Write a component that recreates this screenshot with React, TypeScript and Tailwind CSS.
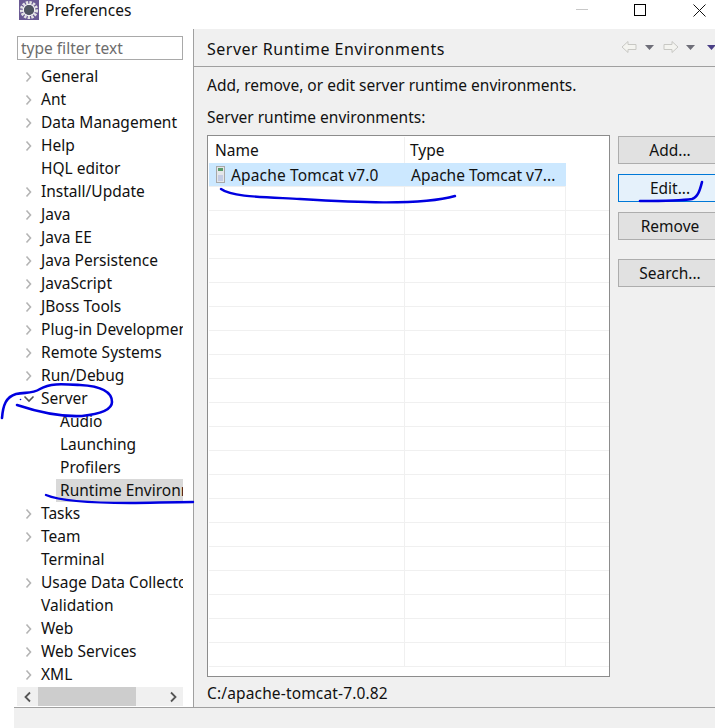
const treeItems = [
  { label: 'General', arrow: true },
  { label: 'Ant', arrow: true },
  { label: 'Data Management', arrow: true },
  { label: 'Help', arrow: true },
  { label: 'HQL editor' },
  { label: 'Install/Update', arrow: true },
  { label: 'Java', arrow: true },
  { label: 'Java EE', arrow: true },
  { label: 'Java Persistence', arrow: true },
  { label: 'JavaScript', arrow: true },
  { label: 'JBoss Tools', arrow: true },
  { label: 'Plug-in Development', arrow: true },
  { label: 'Remote Systems', arrow: true },
  { label: 'Run/Debug', arrow: true },
  { label: 'Server', open: true },
  { label: 'Audio', child: true },
  { label: 'Launching', child: true },
  { label: 'Profilers', child: true },
  { label: 'Runtime Environments', child: true, selected: true },
  { label: 'Tasks', arrow: true },
  { label: 'Team', arrow: true },
  { label: 'Terminal' },
  { label: 'Usage Data Collector', arrow: true },
  { label: 'Validation' },
  { label: 'Web', arrow: true },
  { label: 'Web Services', arrow: true },
  { label: 'XML', arrow: true },
]

function Chevron({ open }: { open?: boolean }) {
  if (open) {
    return (
      <svg width="12" height="12" viewBox="0 0 12 12" className="shrink-0">
        <path d="M1.5 3.5 L6 8 L10.5 3.5" fill="none" stroke="#555" strokeWidth="1.6" />
      </svg>
    )
  }
  return (
    <svg width="12" height="12" viewBox="0 0 12 12" className="shrink-0">
      <path d="M3.5 1.5 L7.5 6 L3.5 10.5" fill="none" stroke="#b4b4b4" strokeWidth="1.6" />
    </svg>
  )
}

function TreeRow({ item }: { item: (typeof treeItems)[number] & { arrow?: boolean; open?: boolean; child?: boolean; selected?: boolean } }) {
  return (
    <div className="flex h-[23px] items-center whitespace-nowrap">
      {item.child ? (
        <div
          className={
            item.selected
              ? 'ml-[39px] h-[23px] flex-1 overflow-hidden bg-[#d9d9d9] pl-1 leading-[23px]'
              : 'ml-[39px] h-[23px] pl-1 leading-[23px]'
          }
        >
          {item.label}
        </div>
      ) : (
        <>
          <div className="flex w-6 shrink-0 justify-start pl-[6px]">
            {(item.arrow || item.open) && <Chevron open={item.open} />}
          </div>
          <span>{item.label}</span>
        </>
      )}
    </div>
  )
}

function ActionButton({ label, focused }: { label: string; focused?: boolean }) {
  return (
    <button
      className={
        focused
          ? 'h-7 w-[104px] border border-[#0078d7] bg-[#e5f1fb] pt-[2px] text-center text-[15.5px]'
          : 'h-7 w-[104px] border border-[#adadad] bg-[#e1e1e1] pt-[2px] text-center text-[15.5px]'
      }
    >
      {label}
    </button>
  )
}

function GridRows() {
  return (
    <>
      {Array.from({ length: 20 }).map((_, i) => (
        <div key={i} className="flex h-6 shrink-0 border-b border-[#f0f0f0]">
          <div className="w-[196px] border-r border-[#f0f0f0]" />
          <div className="w-[161px] border-r border-[#f0f0f0]" />
        </div>
      ))}
    </>
  )
}

export default function App() {
  return (
    <div className="relative h-[728px] w-[715px] overflow-hidden bg-white font-['Noto_Sans',sans-serif] text-[15.5px] text-[#111]">
      {/* title bar */}
      <div className="flex h-[29px] items-start">
        <svg width="20" height="20" viewBox="0 0 20 20" className="ml-[19px] shrink-0">
          <rect width="20" height="20" fill="#6a5a94" />
          <circle cx="10" cy="10" r="7.6" fill="none" stroke="#e4e4e4" strokeWidth="3" strokeDasharray="2.4 1.2" />
          <circle cx="10" cy="10" r="5.6" fill="none" stroke="#f4f4f4" strokeWidth="1.2" />
          <circle cx="10" cy="10" r="5" fill="#4f5560" />
        </svg>
        <span className="ml-[6px] leading-[21px]">Preferences</span>
        <div className="relative ml-auto h-full w-[140px]">
          <div className="absolute left-[1px] top-[9px] h-px w-3 bg-[#c8c8c8]" />
          <div className="absolute left-[59px] top-[4px] h-3 w-3 border border-black" />
          <svg width="13" height="13" viewBox="0 0 13 13" className="absolute left-[118px] top-[4px]">
            <path d="M0.5 0.5 L12.5 12.5 M12.5 0.5 L0.5 12.5" stroke="#111" strokeWidth="1" />
          </svg>
        </div>
      </div>

      {/* body */}
      <div className="flex h-[678px]">
        <div className="w-[193px] shrink-0 pl-[17px] pr-[10px] pt-[7px]">
          <input
            readOnly
            value="type filter text"
            className="h-6 w-full border border-[#a9a9a9] bg-white px-[3px] text-[15.5px] leading-[22px] text-[#6d6d6d] outline-none"
          />
          <div className="mt-[5px] h-[622px] overflow-hidden">
            {treeItems.map((item) => (
              <TreeRow key={item.label} item={item} />
            ))}
          </div>
          <div className="flex h-[19px] items-center justify-between bg-[#f0f0f0]">
            <div className="flex h-full">
              <div className="flex w-[21px] items-center justify-center">
                <svg width="10" height="12" viewBox="0 0 10 12">
                  <path d="M7 1.5 L2.5 6 L7 10.5" fill="none" stroke="#555" strokeWidth="1.8" />
                </svg>
              </div>
              <div className="h-full w-[98px] bg-[#cdcdcd]" />
            </div>
            <div className="flex w-[21px] items-center justify-center">
              <svg width="10" height="12" viewBox="0 0 10 12">
                <path d="M3 1.5 L7.5 6 L3 10.5" fill="none" stroke="#555" strokeWidth="1.8" />
              </svg>
            </div>
          </div>
        </div>

        <div className="min-w-0 flex-1 border-l border-[#a0a0a0] bg-[#f0f0f0]">
          <div className="flex h-[38px] items-center justify-between border-b border-[#a0a0a0] pl-[13px]">
            <span className="mt-[2px] text-[16px] tracking-[0.5px]">Server Runtime Environments</span>
            <svg width="94" height="16" viewBox="0 0 94 16" className="mb-[2px] shrink-0">
              <path d="M1 8 L7 2.5 V5.5 H15 V10.5 H7 V13.5 Z" fill="#f4f4f0" stroke="#c8c8c4" />
              <path d="M24 6 H33 L28.5 11 Z" fill="#6e6e78" />
              <path d="M57 8 L51 2.5 V5.5 H43 V10.5 H51 V13.5 Z" fill="#f4f4f0" stroke="#c8c8c4" />
              <path d="M65 6 H74 L69.5 11 Z" fill="#6e6e78" />
              <path d="M86 6 H95 L90.5 11 Z" fill="#4a3f86" />
            </svg>
          </div>
          <div className="pl-[13px] pt-[8px]">
            <div className="leading-[21px]">Add, remove, or edit server runtime environments.</div>
            <div className="mt-[11px] leading-[21px]">Server runtime environments:</div>
          </div>
          <div className="mt-[7px] flex pl-[13px]">
            <div className="h-[542px] w-[403px] shrink-0 overflow-hidden border border-[#8c8c8c] bg-white pl-px pt-px">
              <div className="flex h-[26px] items-center">
                <div className="h-full w-[196px] border-r border-[#f0f0f0] pl-[6px] leading-[26px]">Name</div>
                <div className="mt-[2px] pl-[5px]">Type</div>
              </div>
              <div className="flex h-[24px] w-[357px] items-center border-b border-[#f0f0f0] bg-[#cce8ff]">
                <div className="flex w-[196px] items-center pl-[7px]">
                  <svg width="9" height="17" viewBox="0 0 9 17" className="shrink-0">
                    <rect x="0.5" y="0.5" width="8" height="16" fill="#e4e6ea" stroke="#a8a8a8" />
                    <rect x="2" y="2" width="5" height="3" fill="#5a9a68" />
                    <rect x="2" y="9" width="5" height="6" fill="#c4cce4" />
                  </svg>
                  <span className="ml-[6px] mt-[2px] tracking-[0.15px]">Apache Tomcat v7.0</span>
                </div>
                <div className="mt-[2px] w-[161px] overflow-hidden whitespace-nowrap pl-[6px]">Apache Tomcat v7...</div>
              </div>
              <GridRows />
            </div>
            <div className="ml-2 flex w-[104px] shrink-0 flex-col gap-[10px] pt-px">
              <ActionButton label="Add..." />
              <ActionButton label="Edit..." focused />
              <ActionButton label="Remove" />
              <div className="mt-[9px]">
                <ActionButton label="Search..." />
              </div>
            </div>
          </div>
          <div className="pl-[13px] pt-[6px] leading-[21px] tracking-[0.15px]">C:/apache-tomcat-7.0.82</div>
        </div>
      </div>

      {/* bottom bar */}
      <div className="ml-[14px] h-[21px] border-t border-[#a0a0a0] bg-[#f0f0f0]" />

      {/* pen annotations over the screenshot */}
      <svg width="715" height="728" className="pointer-events-none absolute left-0 top-0" fill="none" stroke="#0000e0" strokeLinecap="round">
        <path strokeWidth="2.6" d="M2 418 C3 405 6 397 16 394 C26 392 32 394 40 389 C50 383 62 384 80 385 C98 386 112 390 112 402 C112 410 100 414 82 416 C60 417 38 412 17 405" />
        <path strokeWidth="2.4" d="M46 495 C60 501 90 503 130 503 C150 503 170 502 193 502" />
        <path strokeWidth="2.4" d="M221 189 C232 197 262 197 300 199 C350 202 420 206 455 196" />
        <path strokeWidth="2.6" d="M640 201 C660 201 680 201 692 199 C698 197 700 190 702 182" />
        <circle cx="20.5" cy="399.5" r="0.8" fill="#0000e0" stroke="none" />
      </svg>
    </div>
  )
}
